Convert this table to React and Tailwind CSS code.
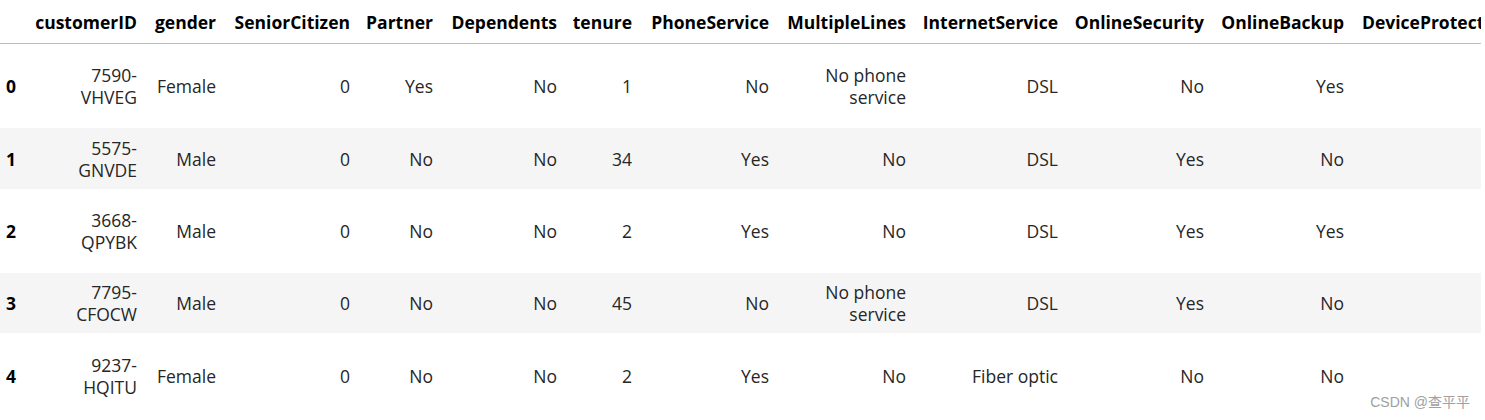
import React from 'react';

const columns = [
  { key: 'customerID', w: 'w-[121px]' },
  { key: 'gender', w: 'w-[79px]' },
  { key: 'SeniorCitizen', w: 'w-[134px]' },
  { key: 'Partner', w: 'w-[83px]' },
  { key: 'Dependents', w: 'w-[124px]' },
  { key: 'tenure', w: 'w-[75px]' },
  { key: 'PhoneService', w: 'w-[137px]' },
  { key: 'MultipleLines', w: 'w-[137px]' },
  { key: 'InternetService', w: 'w-[152px]' },
  { key: 'OnlineSecurity', w: 'w-[146px]' },
  { key: 'OnlineBackup', w: 'w-[140px]' },
];

const rows = [
  { h: 'h-[84px]', bg: 'bg-white', cells: [['7590-', 'VHVEG'], 'Female', '0', 'Yes', 'No', '1', 'No', ['No phone', 'service'], 'DSL', 'No', 'Yes'] },
  { h: 'h-[61px]', bg: 'bg-[#f5f5f5]', cells: [['5575-', 'GNVDE'], 'Male', '0', 'No', 'No', '34', 'Yes', 'No', 'DSL', 'Yes', 'No'] },
  { h: 'h-[84px]', bg: 'bg-white', cells: [['3668-', 'QPYBK'], 'Male', '0', 'No', 'No', '2', 'Yes', 'No', 'DSL', 'Yes', 'Yes'] },
  { h: 'h-[60px]', bg: 'bg-[#f5f5f5]', cells: [['7795-', 'CFOCW'], 'Male', '0', 'No', 'No', '45', 'No', ['No phone', 'service'], 'DSL', 'Yes', 'No'] },
  { h: 'h-[86px]', bg: 'bg-white', cells: [['9237-', 'HQITU'], 'Female', '0', 'No', 'No', '2', 'Yes', 'No', 'Fiber optic', 'No', 'No'] },
];

const Cell = ({ w, children, bold }) => (
  <div className={`${w} shrink-0 flex items-center justify-end text-right pr-[9px] ${bold ? 'font-bold text-black' : ''}`}>
    <div>{children}</div>
  </div>
);

export default function App() {
  return (
    <div
      className="relative w-[1485px] h-[420px] bg-white overflow-hidden text-[17.5px] leading-[22px] text-[#262626]"
      style={{ fontFamily: '"Open Sans", "Noto Sans", sans-serif' }}
    >
      <div className="w-[1481px] overflow-hidden">
        {/* header */}
        <div className="flex h-[44px] border-b border-[#bdbdbd] pt-[1px] whitespace-nowrap">
          <div className="w-[25px] shrink-0" />
          {columns.map((c) => (
            <Cell key={c.key} w={c.w} bold>
              {c.key}
            </Cell>
          ))}
          <div className="shrink-0 flex items-center pl-[9px] font-bold text-black">DeviceProtection</div>
        </div>

        {/* body */}
        {rows.map((r, ri) => (
          <div key={ri} className={`flex ${r.h} ${r.bg} whitespace-nowrap`}>
            <div className="w-[25px] shrink-0 flex items-center pl-[6px] font-bold text-black">{ri}</div>
            {columns.map((c, ci) => {
              const v = r.cells[ci];
              return (
                <Cell key={c.key} w={c.w}>
                  {Array.isArray(v) ? (
                    <>
                      {v[0]}
                      <br />
                      {v[1]}
                    </>
                  ) : (
                    v
                  )}
                </Cell>
              );
            })}
            <div className="flex-1" />
          </div>
        ))}
      </div>

      {/* watermark */}
      <div
        className="absolute right-[15px] bottom-[7px] text-[14px] text-[#a0a0a0]"
        style={{ fontFamily: '"Liberation Sans", "Noto Sans CJK SC", sans-serif' }}
      >
        CSDN @查平平
      </div>
    </div>
  );
}
